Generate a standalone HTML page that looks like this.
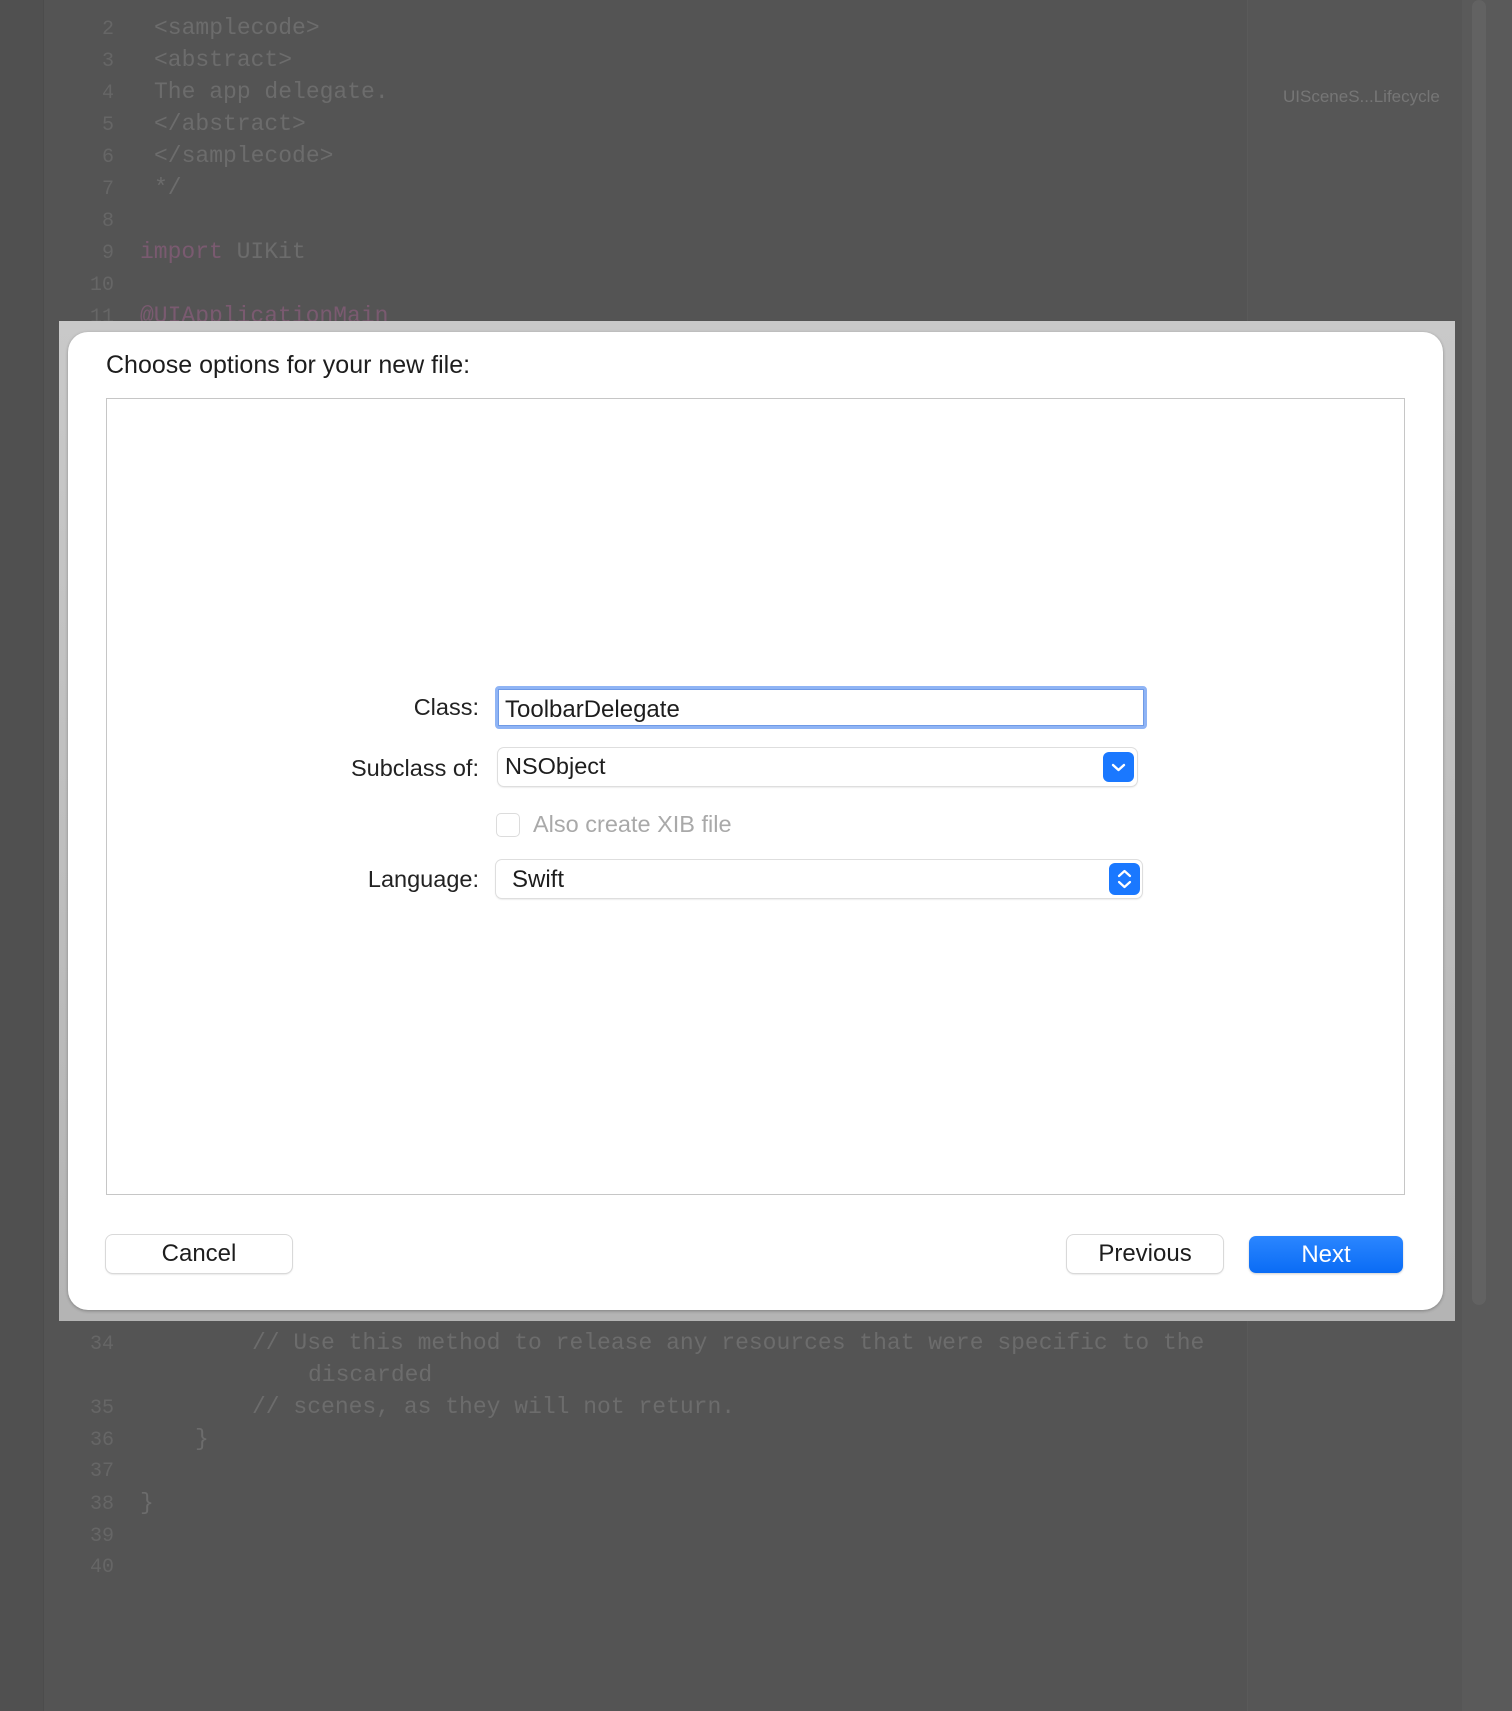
<!DOCTYPE html>
<html><head><meta charset="utf-8"><style>
*{margin:0;padding:0;box-sizing:border-box}
body{width:1512px;height:1711px;background:#545454;position:relative;overflow:hidden;font-family:"Liberation Sans",sans-serif}
.gut{position:absolute;left:0;top:0;width:44px;height:1711px;background:#505050;border-right:1px solid #4c4c4c}
.mini{position:absolute;left:1247px;top:0;width:215px;height:1711px;background:#565656;border-left:1px solid #5a5a5a}
.sb{position:absolute;left:1462px;top:0;width:50px;height:1711px;background:#5a5a5a}
.sb2{position:absolute;left:1472px;top:0;width:14px;height:1305px;background:#626262;border-radius:7px}
.code{position:absolute;font-family:"Liberation Mono",monospace;font-size:23px;color:#6c6c6c;white-space:pre}
.ln{position:absolute;font-family:"Liberation Mono",monospace;font-size:20px;color:#666;text-align:right;width:60px;left:54px}
.kw{color:#7a5a70}
.frame{position:absolute;left:59px;top:321px;width:1396px;height:1000px;background:linear-gradient(#c9c9c9,#b4b4b4)}
.dlg{position:absolute;left:68px;top:332px;width:1375px;height:978px;background:#fff;border-radius:20px;box-shadow:0 1px 3px rgba(0,0,0,.3)}
.t{position:absolute;font-size:25px;color:#1d1d1d}
.box{position:absolute;left:106px;top:398px;width:1299px;height:797px;border:1.5px solid #c6c6c6;background:#fff}
.lbl{position:absolute;right:1033px;font-size:23.5px;color:#222}
.btn{position:absolute;height:38px;border-radius:7px;background:#fff;box-shadow:0 0 0 1px #d9d9d9,0 1px 2px rgba(0,0,0,.2);font-size:24px;color:#1d1d1d;text-align:center;line-height:38px}
</style></head><body>
<div class="gut"></div>
<div class="mini">
<div style="position:absolute;left:35px;top:87px;font-size:17px;color:#767676">UISceneS...Lifecycle</div>
</div>
<div class="sb"></div><div class="sb2"></div>

<div class="ln" style="top:18px">2</div><div class="code" style="left:154px;top:15px">&lt;samplecode&gt;</div>
<div class="ln" style="top:50px">3</div><div class="code" style="left:154px;top:47px">&lt;abstract&gt;</div>
<div class="ln" style="top:82px">4</div><div class="code" style="left:154px;top:79px">The app delegate.</div>
<div class="ln" style="top:114px">5</div><div class="code" style="left:154px;top:111px">&lt;/abstract&gt;</div>
<div class="ln" style="top:146px">6</div><div class="code" style="left:154px;top:143px">&lt;/samplecode&gt;</div>
<div class="ln" style="top:178px">7</div><div class="code" style="left:154px;top:175px">*/</div>
<div class="ln" style="top:210px">8</div>
<div class="ln" style="top:242px">9</div><div class="code" style="left:140px;top:239px"><span class="kw">import</span> UIKit</div>
<div class="ln" style="top:274px">10</div>
<div class="ln" style="top:306px">11</div><div class="code kw" style="left:140px;top:303px">@UIApplicationMain</div>

<div class="ln" style="top:1333px">34</div><div class="code" style="left:252px;top:1330px">// Use this method to release any resources that were specific to the</div>
<div class="code" style="left:308px;top:1362px">discarded</div>
<div class="ln" style="top:1397px">35</div><div class="code" style="left:252px;top:1394px">// scenes, as they will not return.</div>
<div class="ln" style="top:1429px">36</div><div class="code" style="left:195px;top:1426px">}</div>
<div class="ln" style="top:1460px">37</div>
<div class="ln" style="top:1493px">38</div><div class="code" style="left:140px;top:1490px">}</div>
<div class="ln" style="top:1525px">39</div>
<div class="ln" style="top:1556px">40</div>

<div class="frame"></div>
<div class="dlg"></div>
<div class="t" style="left:106px;top:351px">Choose options for your new file:</div>
<div class="box"></div>

<div class="lbl" style="top:694px">Class:</div>
<div style="position:absolute;left:495px;top:686px;width:652px;height:43px;border:3px solid #8fb4f5;border-radius:4px;background:#fff"><div style="position:absolute;inset:0;border:1px solid #6f9ae6"></div>
<div style="position:absolute;left:7px;top:7px;font-size:24px;color:#1d1d1d">ToolbarDelegate</div></div>

<div class="lbl" style="top:755px">Subclass of:</div>
<div style="position:absolute;left:498px;top:748px;width:639px;height:38px;border-radius:6px;background:#fff;box-shadow:0 0 0 1px #dedede,0 1px 2px rgba(0,0,0,.18)">
<div style="position:absolute;left:7px;top:5px;font-size:23.5px;color:#1d1d1d">NSObject</div>
<div style="position:absolute;right:3px;top:4px;width:31px;height:30px;border-radius:6px;background:#1a78ff">
<svg width="31" height="30"><path d="M10 13l5.5 5 5.5-5" stroke="#fff" stroke-width="2.4" fill="none" stroke-linecap="round" stroke-linejoin="round"/></svg></div></div>

<div style="position:absolute;left:496px;top:813px;width:24px;height:24px;border-radius:5px;border:1px solid #dcdcdc;background:#fff"></div>
<div style="position:absolute;left:533px;top:811px;font-size:23.5px;color:#a9a9a9">Also create XIB file</div>

<div class="lbl" style="top:866px">Language:</div>
<div style="position:absolute;left:496px;top:860px;width:646px;height:38px;border-radius:6px;background:#fff;box-shadow:0 0 0 1px #dedede,0 1px 2px rgba(0,0,0,.18)">
<div style="position:absolute;left:16px;top:6px;font-size:24px;color:#1d1d1d">Swift</div>
<div style="position:absolute;right:2px;top:3px;width:31px;height:32px;border-radius:6px;background:#1a78ff">
<svg width="31" height="32"><path d="M10 13l5.5-5 5.5 5M10 19l5.5 5 5.5-5" stroke="#fff" stroke-width="2.2" fill="none" stroke-linecap="round" stroke-linejoin="round"/></svg></div></div>

<div class="btn" style="left:106px;top:1235px;width:186px">Cancel</div>
<div class="btn" style="left:1067px;top:1235px;width:156px">Previous</div>
<div class="btn" style="left:1249px;top:1236px;width:154px;height:37px;line-height:37px;background:linear-gradient(#2b86ff,#0a6cf5);color:#fff;box-shadow:0 1px 2px rgba(0,0,0,.2)">Next</div>
</body></html>
